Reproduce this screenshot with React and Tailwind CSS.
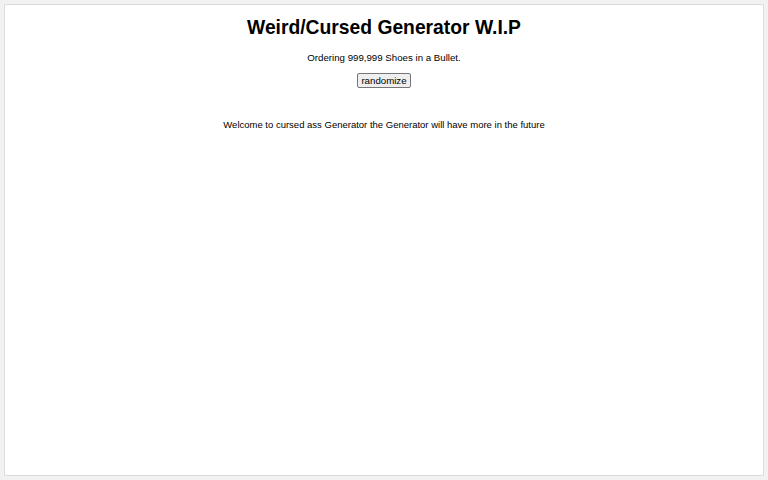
export default function App() {
  return (
    <div className="h-[480px] w-[768px] bg-[#f2f2f2] p-[4px] font-['Liberation_Sans',Arial,sans-serif] text-black">
      <main className="flex h-full flex-col items-center border border-[#dcdcdc] bg-white">
        <h1 className="mt-[11px] text-[19.3px] leading-[24px] font-bold">Weird/Cursed Generator W.I.P</h1>
        <p className="mt-[12px] text-[9.7px] leading-[12px]">Ordering 999,999 Shoes in a Bullet.</p>
        <button className="mt-[9px] h-[15px] border border-[#767676] bg-[#efefef] px-[3px] text-[9.7px] leading-[12px] rounded-[2px]">
          randomize
        </button>
        <p className="mt-[31px] text-[9.5px] leading-[12px]">
          Welcome to cursed ass Generator the Generator will have more in the future
        </p>
      </main>
    </div>
  );
}
